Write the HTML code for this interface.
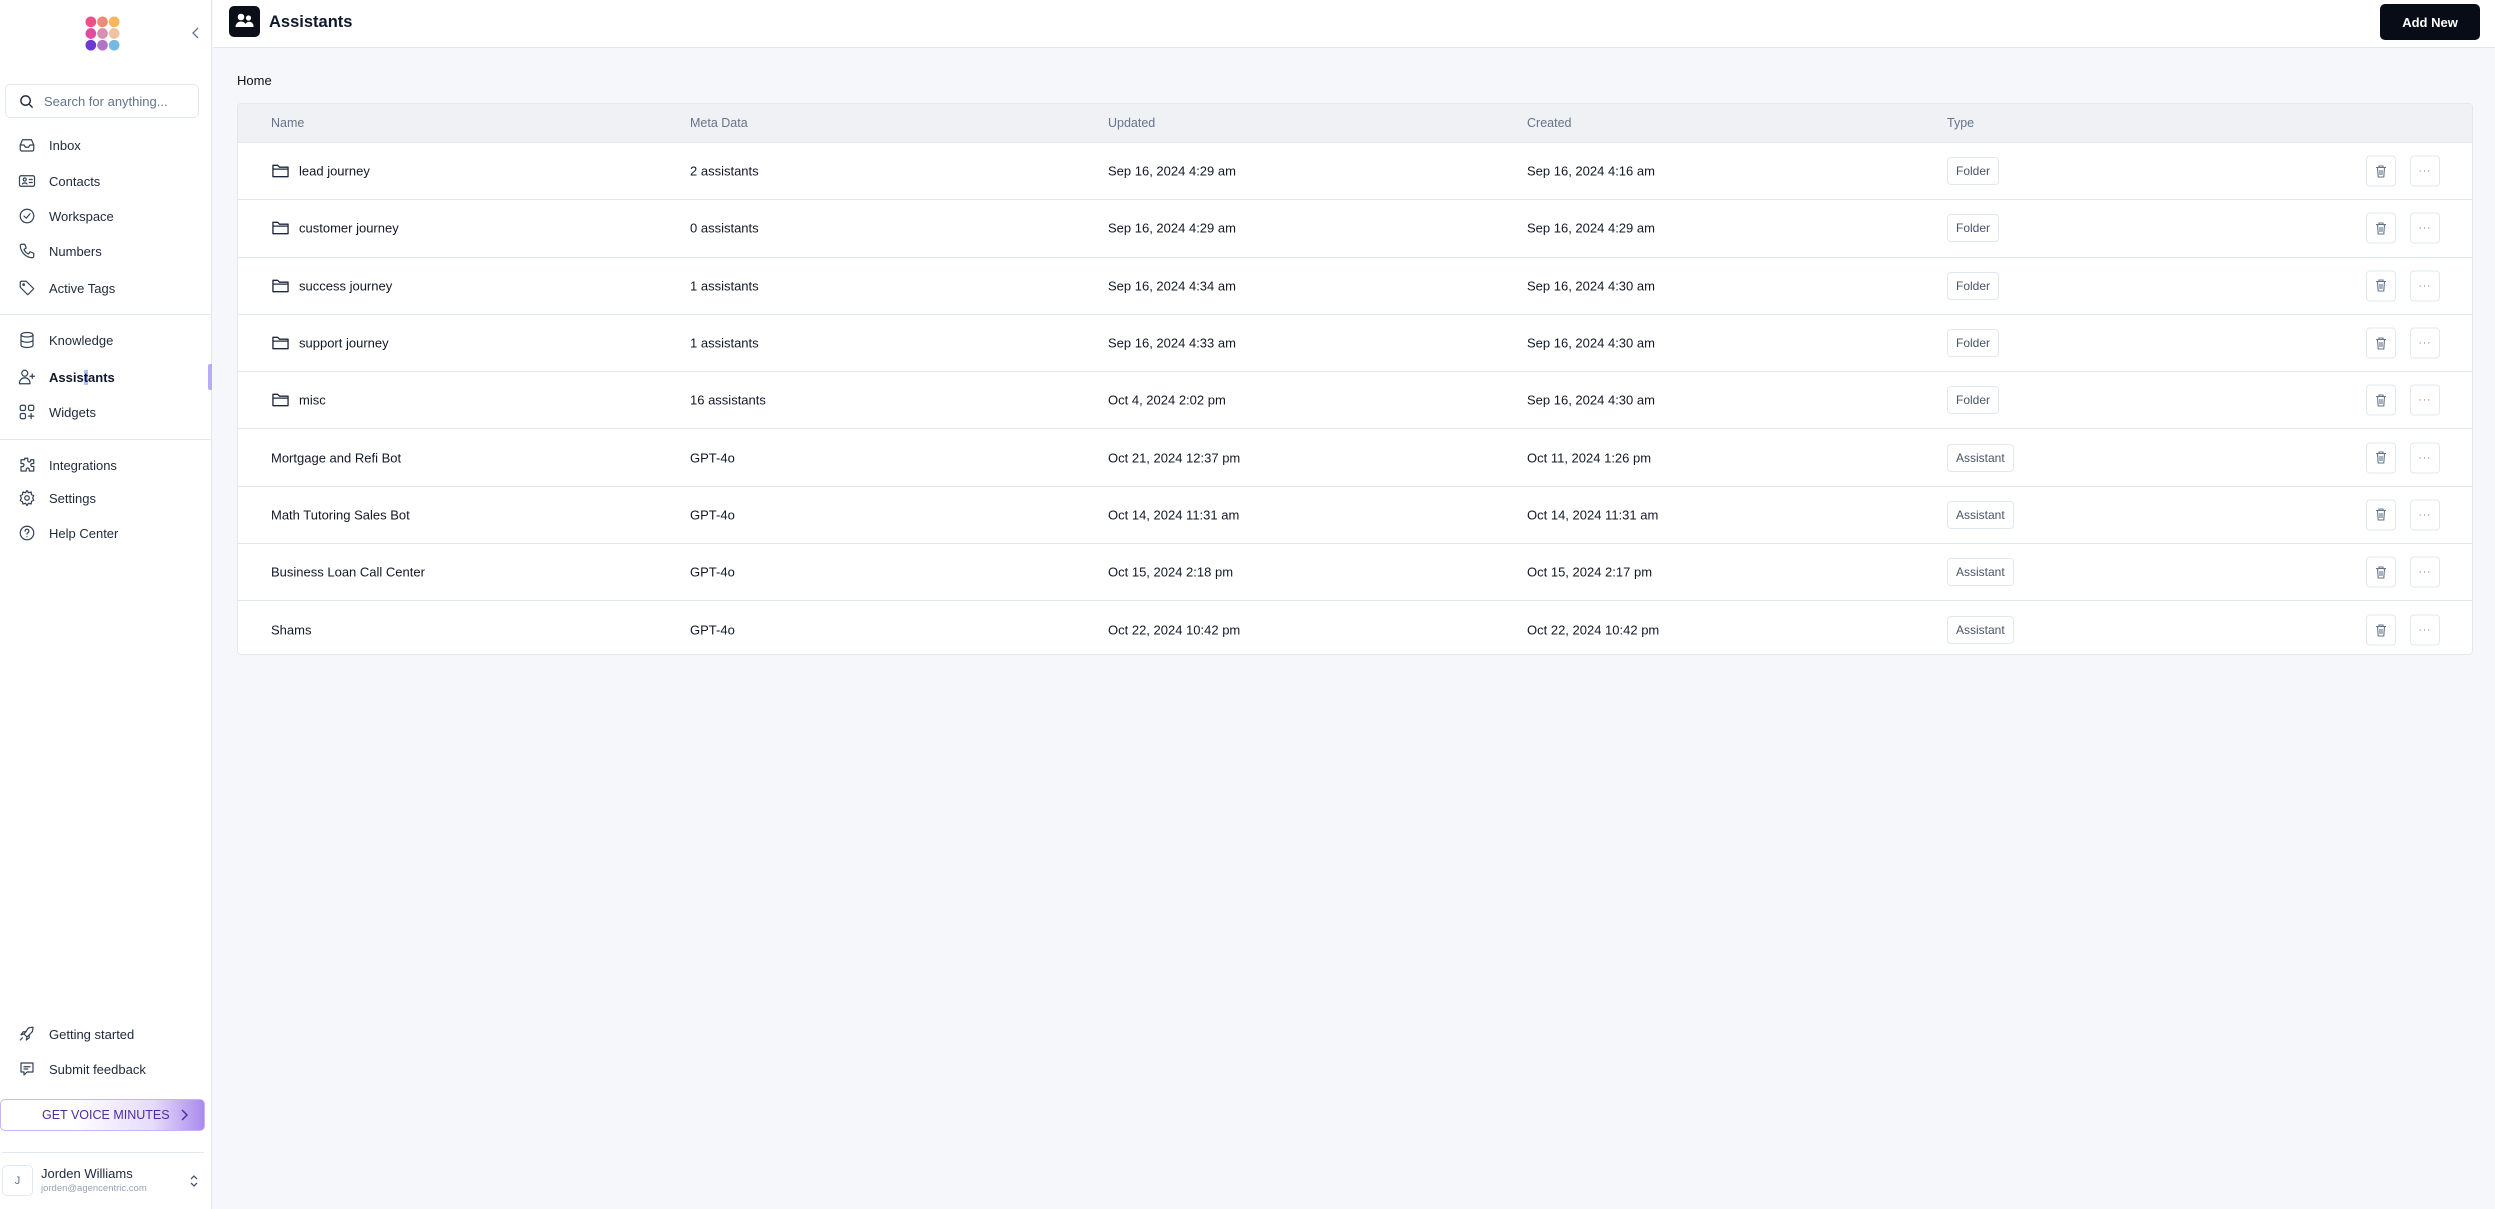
<!DOCTYPE html>
<html><head><meta charset="utf-8"><style>
*{box-sizing:border-box;margin:0;padding:0}
body{width:2495px;height:1209px;background:#f6f7fb;font-family:"Liberation Sans",sans-serif;color:#0f172a;position:relative;overflow:hidden}
.sb{position:absolute;left:0;top:0;width:212px;height:1209px;background:#fff;border-right:1px solid #e2e8f0}
.abs{position:absolute}
.nav{position:absolute;left:18px;font-size:13px;font-weight:500;color:#1e293b;display:flex;align-items:center;height:20px;margin-top:-10px;white-space:nowrap}
.nav svg{width:18px;height:18px;margin-right:13px;fill:none;stroke:#334155;stroke-width:1.6;stroke-linecap:round;stroke-linejoin:round}
.hr{position:absolute;left:0;width:211px;height:1px;background:#e2e8f0}
.hdr{position:absolute;left:213px;top:0;right:0;height:48px;background:#fff;border-bottom:1px solid #e2e8f0}
.tbl{position:absolute;left:237px;top:103px;width:2236px;height:552px;background:#fff;border:1px solid #e2e8f0;border-radius:4px;overflow:hidden}
.th{height:39px;background:#f0f1f4;border-bottom:1px solid #e2e8f0;position:relative;font-size:12.5px;color:#64748b}
.row{height:57.3px;border-bottom:1px solid #e2e8f0;position:relative;font-size:13px;color:#111827}
.row:last-child{border-bottom:none}
.c{position:absolute;top:50%;transform:translateY(-50%);white-space:nowrap}
.badge{position:absolute;left:1709px;top:50%;transform:translateY(-50%);border:1px solid #e2e8f0;border-radius:4px;padding:6px 8px;font-size:12px;color:#475569}
.btn{position:absolute;top:50%;transform:translateY(-50%);width:30px;height:31px;border:1px solid #e2e8f0;border-radius:4px;display:flex;align-items:center;justify-content:center}
</style></head><body>
<div class="sb">
  <svg class="abs" style="left:85px;top:16px" width="35" height="35" viewBox="0 0 36 36">
    <circle cx="6" cy="6" r="5.5" fill="#ef4f86"/><circle cx="18" cy="6" r="5.5" fill="#f08a78"/><circle cx="30" cy="6" r="5.5" fill="#f8b65e"/>
    <circle cx="6" cy="18" r="5.5" fill="#e44aa2"/><circle cx="18" cy="18" r="5.5" fill="#d98fb0"/><circle cx="30" cy="18" r="5.5" fill="#f0c2a2"/>
    <circle cx="6" cy="30" r="5.5" fill="#6a3ad2"/><circle cx="18" cy="30" r="5.5" fill="#b274c4"/><circle cx="30" cy="30" r="5.5" fill="#76b8e0"/>
  </svg>
  <svg class="abs" style="left:191px;top:26px" width="10" height="14" viewBox="0 0 10 14"><path d="M7 2L2 7l5 5" fill="none" stroke="#64748b" stroke-width="1.3"/></svg>
  <div class="abs" style="left:5px;top:84px;width:194px;height:34px;border:1px solid #e2e8f0;border-radius:5px;font-size:13px;color:#64748b;display:flex;align-items:center;padding-left:13px;white-space:nowrap">
    <svg width="15" height="15" viewBox="0 0 16 16" style="margin-right:10px"><circle cx="7" cy="7" r="5" fill="none" stroke="#1e293b" stroke-width="1.5"/><path d="M11 11l3.5 3.5" stroke="#1e293b" stroke-width="1.5"/></svg>Search for anything...</div>
  <div class="nav" style="top:145px"><svg viewBox="0 0 24 24"><path d="M3 12l3-7h12l3 7v6a2 2 0 0 1-2 2H5a2 2 0 0 1-2-2z"/><path d="M3 12h5l2 3h4l2-3h5"/></svg>Inbox</div>
  <div class="nav" style="top:181px"><svg viewBox="0 0 24 24"><rect x="2" y="5" width="20" height="14" rx="2"/><circle cx="9" cy="10" r="2"/><path d="M6 16c1-2 5-2 6 0M15 10h4M15 14h4"/></svg>Contacts</div>
  <div class="nav" style="top:216px"><svg viewBox="0 0 24 24"><circle cx="12" cy="12" r="9"/><path d="M8 12l3 3 5-6"/></svg>Workspace</div>
  <div class="nav" style="top:251px"><svg viewBox="0 0 24 24"><path d="M5 3h4l2 5-3 2a11 11 0 0 0 6 6l2-3 5 2v4a2 2 0 0 1-2 2A17 17 0 0 1 3 5a2 2 0 0 1 2-2"/></svg>Numbers</div>
  <div class="nav" style="top:288px"><svg viewBox="0 0 24 24"><path d="M3 4v7l10 10 8-8L11 3H4z"/><circle cx="7.5" cy="7.5" r="1"/></svg>Active Tags</div>
  <div class="hr" style="top:314px"></div>
  <div class="nav" style="top:340px"><svg viewBox="0 0 24 24"><ellipse cx="12" cy="5" rx="8" ry="3"/><path d="M4 5v14c0 1.7 3.6 3 8 3s8-1.3 8-3V5M4 12c0 1.700 3.6 3 8 3s8-1.3 8-3"/></svg>Knowledge</div>
  <div class="nav" style="top:377px;font-weight:700;color:#0f172a"><svg viewBox="0 0 24 24"><circle cx="9" cy="7" r="4"/><path d="M2 21v-1a7 7 0 0 1 14 0v1zM19 8v6M16 11h6"/></svg>Assis<span style="background:#a9c4f5">t</span>ants</div>
  <div class="abs" style="left:208px;top:364px;width:4px;height:26px;background:#b5aef7;border-radius:2px 0 0 2px"></div>
  <div class="nav" style="top:412px"><svg viewBox="0 0 24 24"><rect x="3" y="3" width="7" height="7" rx="2"/><rect x="14" y="3" width="7" height="7" rx="2"/><rect x="3" y="14" width="7" height="7" rx="2"/><path d="M17.5 14v7M14 17.5h7"/></svg>Widgets</div>
  <div class="hr" style="top:439px"></div>
  <div class="nav" style="top:465px"><svg viewBox="0 0 24 24"><path d="M9 3h4v3a2 2 0 0 0 4 0V5h4v5h-2a2 2 0 0 0 0 4h2v6h-6v-2a2 2 0 0 0-4 0v2H4v-6h2a2 2 0 0 0 0-4H4V5h5z"/></svg>Integrations</div>
  <div class="nav" style="top:498px"><svg viewBox="0 0 24 24"><circle cx="12" cy="12" r="3"/><path d="M12 2l2 3 3.5-1 .5 3.5 3 1.5-1.5 3 1.5 3-3 1.5-.5 3.5-3.5-1-2 3-2-3-3.5 1L6 17l-3-1.5L4.5 12 3 9l3-1.5L6.5 4 10 5z"/></svg>Settings</div>
  <div class="nav" style="top:533px"><svg viewBox="0 0 24 24"><circle cx="12" cy="12" r="9"/><path d="M9.5 9.5a2.5 2.5 0 1 1 3.5 2.3c-.7.3-1 1-1 1.7M12 17h.01"/></svg>Help Center</div>
  <div class="nav" style="top:1034px"><svg viewBox="0 0 24 24"><path d="M14 4c3-1 6-1 6-1s0 3-1 6l-7 7-4-4zM8 12l-4 1 3-4h4M12 16l-1 4 4-3v-4M6 17l-3 3"/></svg>Getting started</div>
  <div class="nav" style="top:1069px"><svg viewBox="0 0 24 24"><path d="M4 4h16v12h-8l-4 4v-4H4z"/><path d="M8 9h8M8 12h5"/></svg>Submit feedback</div>
  <div class="abs" style="left:0;top:1099px;width:205px;height:32px;border:1px solid #c4b5fd;border-radius:5px;background:linear-gradient(90deg,#fff 0%,#fff 35%,#e6dbfb 75%,#a98bec 100%);font-size:12.5px;color:#4c2d9c;white-space:nowrap">
    <span class="abs" style="left:41px;top:8px">GET VOICE MINUTES</span>
    <svg class="abs" style="left:178px;top:8px" width="10" height="14" viewBox="0 0 10 14"><path d="M3 2l5 5-5 5" fill="none" stroke="#4c2d9c" stroke-width="1.4"/></svg></div>
  <div class="hr" style="top:1152px;left:2px;width:202px"></div>
  <div class="abs" style="left:2px;top:1165px;width:31px;height:31px;border:1px solid #e2e8f0;border-radius:5px;font-size:11px;color:#64748b;display:flex;align-items:center;justify-content:center">J</div>
  <div class="abs" style="left:41px;top:1166px;font-size:13px;color:#1e293b">Jorden Williams</div>
  <div class="abs" style="left:41px;top:1183px;font-size:9.5px;color:#94a3b8">jorden@agencentric.com</div>
  <svg class="abs" style="left:188px;top:1172px" width="12" height="18" viewBox="0 0 12 18"><path d="M3 7l3-3 3 3M3 11l3 3 3-3" fill="none" stroke="#475569" stroke-width="1.3"/></svg>
</div>
<div class="hdr">
  <div class="abs" style="left:16px;top:6px;width:31px;height:31px;background:#0b0f19;border-radius:5px">
    <svg width="31" height="31" viewBox="0 0 31 31"><circle cx="12" cy="11" r="3.3" fill="#fff"/><circle cx="19.5" cy="12" r="2.6" fill="#fff"/><path d="M6.5 21a5.5 5.5 0 0 1 11 0z" fill="#fff"/><path d="M16 20a4 4 0 0 1 8.5 0v1H17z" fill="#fff"/></svg>
  </div>
  <div class="abs" style="left:56px;top:13px;font-size:16.5px;font-weight:600;color:#0f172a">Assistants</div>
  <div class="abs" style="left:2167px;top:4px;width:100px;height:36px;background:#080c17;border-radius:5px;color:#fff;font-size:13px;font-weight:700;display:flex;align-items:center;justify-content:center">Add New</div>
</div>
<div class="abs" style="left:237px;top:73px;font-size:13px;color:#111">Home</div>
<div class="tbl">
  <div class="th"><span class="c" style="left:33px">Name</span><span class="c" style="left:452px">Meta Data</span><span class="c" style="left:870px">Updated</span><span class="c" style="left:1289px">Created</span><span class="c" style="left:1709px">Type</span></div>
  <div id="rows"></div>
</div>
<script>
var F='<svg class="c" style="left:33px" width="19" height="17" viewBox="0 0 20 18"><path d="M2 3h5l2 2h9v10H2z M2 7h16" fill="none" stroke="#1e293b" stroke-width="1.4" stroke-linejoin="round"/></svg>';
var d=[["lead journey","2 assistants","Sep 16, 2024 4:29 am","Sep 16, 2024 4:16 am","Folder",1],
["customer journey","0 assistants","Sep 16, 2024 4:29 am","Sep 16, 2024 4:29 am","Folder",1],
["success journey","1 assistants","Sep 16, 2024 4:34 am","Sep 16, 2024 4:30 am","Folder",1],
["support journey","1 assistants","Sep 16, 2024 4:33 am","Sep 16, 2024 4:30 am","Folder",1],
["misc","16 assistants","Oct 4, 2024 2:02 pm","Sep 16, 2024 4:30 am","Folder",1],
["Mortgage and Refi Bot","GPT-4o","Oct 21, 2024 12:37 pm","Oct 11, 2024 1:26 pm","Assistant",0],
["Math Tutoring Sales Bot","GPT-4o","Oct 14, 2024 11:31 am","Oct 14, 2024 11:31 am","Assistant",0],
["Business Loan Call Center","GPT-4o","Oct 15, 2024 2:18 pm","Oct 15, 2024 2:17 pm","Assistant",0],
["Shams","GPT-4o","Oct 22, 2024 10:42 pm","Oct 22, 2024 10:42 pm","Assistant",0]];
var h='';
d.forEach(function(r){
h+='<div class="row">'+(r[5]?F:'')+'<span class="c" style="left:'+(r[5]?61:33)+'px">'+r[0]+'</span><span class="c" style="left:452px">'+r[1]+'</span><span class="c" style="left:870px">'+r[2]+'</span><span class="c" style="left:1289px">'+r[3]+'</span><span class="badge">'+r[4]+'</span>'+
'<span class="btn" style="left:2128px"><svg width="12" height="14" viewBox="0 0 12 14"><path d="M1 3h10M4 3V1.5h4V3M2.5 3l.7 9.5h5.6L9.5 3M5 5.5v5M7 5.5v5" fill="none" stroke="#64748b" stroke-width="1.1"/></svg></span>'+
'<span class="btn" style="left:2172px;font-size:10px;color:#64748b;letter-spacing:1px">···</span></div>';});
document.getElementById('rows').innerHTML=h;
</script>
</body></html>
